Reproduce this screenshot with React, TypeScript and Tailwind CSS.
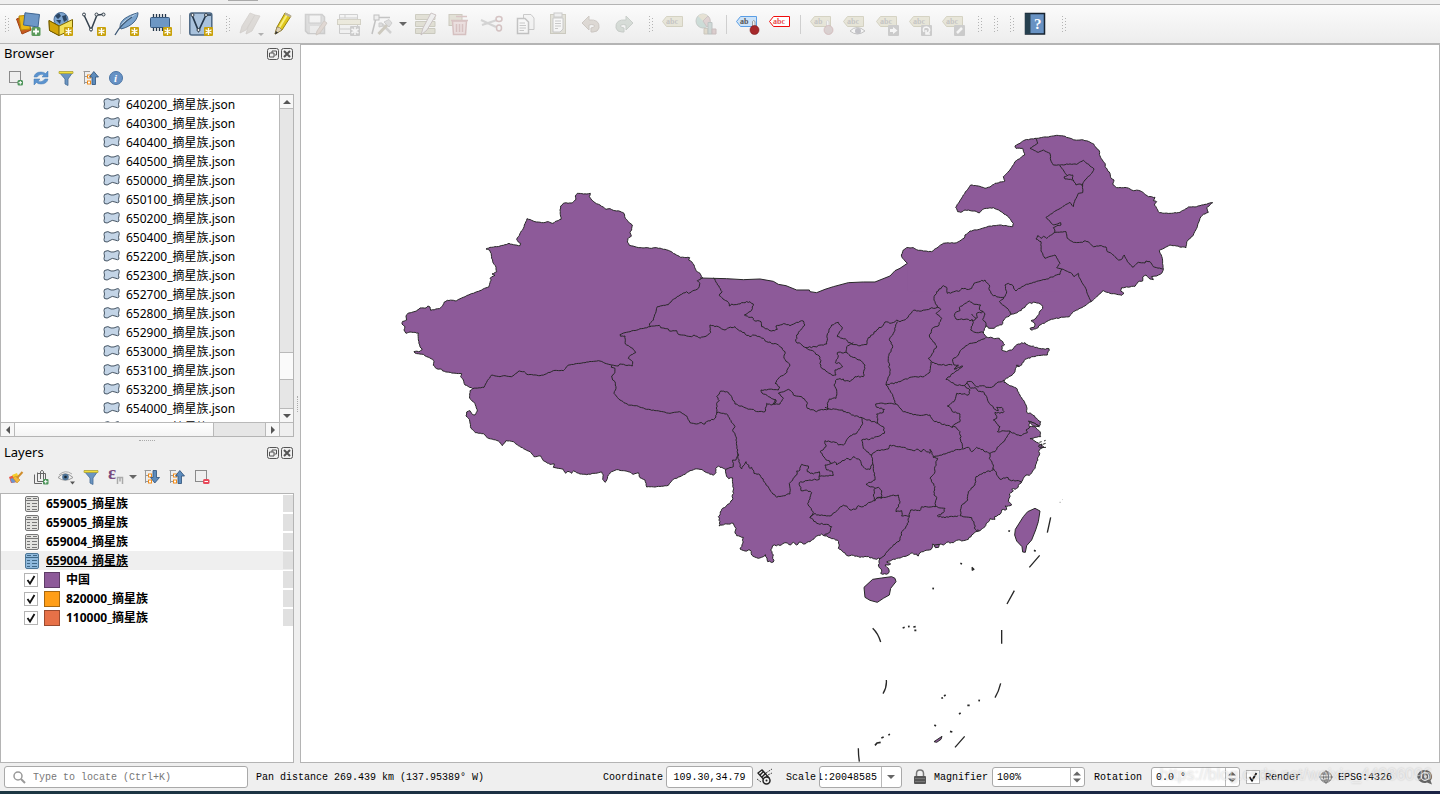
import type { ReactNode } from "react";

const browserFiles = [
    "640200", "640300", "640400", "640500", "650000", "650100", "650200", "650400", "652200",
    "652300", "652700", "652800", "652900", "653000", "653100", "653200", "654000", "654200",
];

const tables = [
    { id: 1, name: "659005_摘星族", active: false },
    { id: 2, name: "659005_摘星族", active: false },
    { id: 3, name: "659004_摘星族", active: false },
    { id: 4, name: "659004_摘星族", active: true },
];

const layers = [
    { name: "中国", swatch: "bg-[#8d5a99] border-[#5e3c66]" },
    { name: "820000_摘星族", swatch: "bg-[#ff9e17] border-[#a8680f]" },
    { name: "110000_摘星族", swatch: "bg-[#e77148] border-[#9a4b30]" },
];

// Splits long segments into short uneven steps, so that borders look surveyed. End points stay put.
function roughen(path: string, amount: number) {
    let out = "";
    let px = 0;
    let py = 0;
    let seed = 7;
    let nums: number[] = [];
    let move = false;
    for (const token of path.match(/[MLZ]|-?\d+/g) ?? []) {
        if (token === "M") {
            move = true;
            continue;
        }
        if (token === "L") continue;
        if (token === "Z") {
            out += "Z";
            continue;
        }
        nums.push(Number(token));
        if (nums.length < 2) continue;
        const [x, y] = nums;
        nums = [];
        if (move) {
            out += `M${x} ${y}`;
            move = false;
        } else {
            const length = Math.hypot(x - px, y - py);
            const steps = Math.max(1, Math.round(length / 5));
            for (let i = 1; i < steps; i++) {
                seed = (seed * 137 + 59) % 1009;
                const shift = (seed / 1009 - 0.5) * 2 * amount;
                const bx = px + ((x - px) * i) / steps - ((y - py) / length) * shift;
                const by = py + ((y - py) * i) / steps + ((x - px) / length) * shift;
                out += `L${bx.toFixed(1)} ${by.toFixed(1)}`;
            }
            out += `L${x} ${y}`;
        }
        px = x;
        py = y;
    }
    return out;
}

// Map sheets, three units per pixel
const coastWest = roughen(
    "M938 293L930 280 918 272 912 255 905 245 896 240 899 233 872 232 855 222 835 211 815 206 800 203 785 205 768 203 750 203 735 200 718 196 712 186 714 176 724 168 720 158 725 150 727 135 715 125 706 115 702 100 690 94 670 91 660 86 648 88 630 75 615 68 605 60 598 50 601 40 580 42 562 40 556 48 558 58 548 68 520 70 512 78 510 90 513 118 500 123 488 130 475 125 460 128 440 126 425 121 411 116 400 145 380 178 385 186 392 190 390 197 370 194 357 190 340 196 320 200 300 202 288 207 300 212 304 225 308 245 318 262 320 275 306 282 315 286 300 295 304 300 300 308 297 320 270 332 240 343 215 354 200 362 172 361 163 366 155 380 148 386 122 391 120 381 114 378 108 384 90 384 80 393 55 399 48 408 50 420 38 424 36 432 45 440 42 450 48 460 60 456 85 459 85 480 90 500 97 508 90 514 72 515 75 519 100 523 110 530 128 538 132 545 130 556 140 566 155 568 158 573 185 579 215 581 212 590 220 600 225 615 248 626 240 632 239 655 255 670 262 693 255 705 247 703 240 692 230 696 228 708 238 718 243 745 256 758 280 761 292 773 325 783 337 797 348 782 370 785 385 797 405 808 420 815 432 830 452 828 460 842 480 853 493 852 490 862 520 868 527 880 534 874 545 880 550 873 570 882 590 884 612 880 635 876 640 885 638 898 645 907 650 900 655 885 665 875 680 869 700 872 718 876 730 883 745 878 750 893 765 900 770 921 800 920 835 916 850 898 870 890 885 883 900 872 915 867 930 868",
    1,
);
const coastSouth = roughen(
    "M0 658L20 668 40 676 48 668 47 655 56 648 70 655 77 658 80 680 86 686 98 684 100 720 97 750 80 766 65 778 60 795 55 800 60 815 57 828 80 822 100 820 108 835 105 845 110 857 130 862 128 880 120 897 135 903 150 900 155 915 175 925 190 920 196 914 203 935 220 936 220 915 212 900 218 887 245 884 258 878 272 885 280 877 290 885 300 876 310 882 330 875 345 862 365 852 385 862 400 866 412 870 418 885 415 895 430 907 445 918 460 916 480 922 500 920 520 926 540 926 535 945 545 960 542 970 548 973 565 970 567 960 555 945 572 942 560 936 590 925 605 922 620 918 632 910 650 912 655 918 660 908 670 905 688 900 696 894 698 882 710 892 720 882 730 885 740 877 760 878 770 871 790 872 805 868 815 855 828 845 840 842 855 830 862 818 870 806 885 808 884 800 900 793 905 780 920 778 915 768 935 765 925 755 930 740 928 732 940 722 935 718 950 715 968 690 978 675 988 676 1005 655 1010 635 1018 615 1018 600 1032 592 1022 585 1010 577 1000 570 990 566 1015 560 1022 560 1020 545 1005 530 988 530 990 515 1005 522 1018 528 1022 515 1010 505 995 492 980 487 978 465 970 450 960 435 952 418 935 408 912 397 915 388 932 378 945 365 948 352 965 345 975 328 1000 320 1030 315 1042 315 1047 296 1030 296 1010 292 985 286 975 278 955 282 935 300 920 305 905 300 905 288 914 284 905 272 898 265 880 265 858 260 850 245 858 228 870 235 882 235 890 228 905 225 915 205 930 195 955 185 975 172 985 160 1005 157 1025 165 1028 175 1010 200 1002 210 993 212 1005 222 1002 232 990 235 993 240 1010 235 1020 225 1045 212 1080 203",
    2,
);
const coastEast = roughen(
    "M510 578L538 575 550 560 580 545 603 530 620 515 640 497 660 505 680 508 695 511 702 505 692 498 695 488 735 484 745 470 758 468 758 456 768 450 780 462 790 464 784 455 800 453 815 445 820 432 817 400 808 376 840 360 888 368 890 350 910 330 920 310 930 280 940 268 955 262 950 248 968 233 945 238 920 245 895 246 870 262 840 265 808 263 800 250 793 240 800 230 790 227 795 217 775 215 760 203 745 196 730 197 710 188 680 188 668 178 672 165 662 158 660 145 645 125 645 115 637 105 628 88 628 78 615 65 612 58 595 49 580 45 555 45 520 33 500 31 470 36 440 40 405 45 390 55 375 63 378 70 398 70 404 90 375 110 360 135 340 155 345 168 315 175 300 186 285 190 265 183 242 180 220 210 205 235 197 247 203 260 212 262 225 255 255 258 268 264 280 252 310 248 330 258 355 275 370 295 368 305 330 300 295 304 268 313 240 318 225 330 222 340 200 353 160 355 125 380 85 376 70 368 50 368 40 375 34 390 38 400 52 415",
    1,
);
const coastNorth =
    "M622 40L600 55 585 62 570 78 525 96 490 96 445 98 400 110 375 118 350 128 330 125 328 120 290 120 258 107 235 103 220 94 180 87 130 89 80 86 0 84";

const bordersWest = [
    "M248 626L282 622 292 602 305 585 330 590 345 587 365 590 388 573 403 575 410 583 450 587 465 583 490 572 520 572 535 555 580 548 625 542 660 554 685 558 690 552 727 558 728 545 715 535 722 525 737 518 728 505 706 492 705 468 692 469 690 464 705 458 780 440 778 432 790 420 802 380 835 374 850 358 870 345 890 335 895 340 925 325 930 310 922 302 938 293",
    "M780 440L808 436 812 443 835 447 838 453 860 452 865 463 905 470 912 465 930 474",
    "M930 728L920 732 900 728 890 708 868 695 840 700 800 692 770 688 740 677 715 675 690 660 672 640 678 625 675 605 668 600 665 588 675 578 675 565 664 562 665 556",
].map((d) => roughen(d, 1));
const bordersSouth = [
    "M40 84L66 125 58 137 85 157 88 168 95 162 105 164 130 158 150 155 160 162 155 180 133 195 160 205 163 212 183 215 185 230 215 243 232 238 228 228 250 221 270 227 290 217 310 213 315 225 290 255 288 275 318 293 345 290 380 282 383 250 395 225 415 217 427 232 412 260 440 270 445 278 475 287 500 284 503 268 530 240 550 225 555 216 575 219 590 210 600 215 620 205 640 181 665 183 690 176 712 172 705 155 702 145 710 125 730 107 740 112 742 130 780 122 785 115 800 118 815 115 822 100 855 90 868 105 868 120 880 137 912 142 920 125 915 105 925 100 940 108 948 123 965 110 1000 97 1020 92 1040 87 1080 73",
    "M912 142L898 155 908 165 925 178 935 193",
    "M765 190L780 182 778 172 790 165 808 153 825 163 842 165 838 178 848 186 830 190 832 203 820 212 795 208 768 207 763 197Z",
    "M845 183L855 192 848 208 858 220 858 230M815 207L820 218 812 240 830 248 850 247M815 192L828 205",
    "M712 172L722 178 708 190 725 205 715 228 697 235 688 258 710 288 695 315 685 325 695 337 725 345 757 345",
    "M858 262L825 278 810 280 785 298 775 315 758 328 762 345 775 345 762 357 788 348 760 370 738 388 768 405 795 406 802 395 815 395 830 410 848 407 858 412 875 412 890 400 912 390",
    "M692 337L690 365 672 380 630 382 600 395 558 405 570 370 565 320 578 290 568 268 580 250 592 215",
    "M558 405L575 430 588 462 550 460 527 462 530 472 553 478 550 487 530 492 533 520 483 502 455 495 450 490 430 485 428 480 385 477 382 460 388 447 408 445 410 420 402 405 410 388 430 387 435 393 450 395 465 380 490 380 495 345 480 330 455 320 440 308 412 308 414 322 406 338 420 340 428 350 405 360 408 375 395 375 362 350 360 322 345 308 318 293",
    "M440 308L440 290 460 278",
    "M0 265L20 258 32 247 30 225 55 230 75 240 82 235 105 230 110 236 150 260 158 255 190 265 200 275 235 285 255 305 252 325 270 345 258 370 240 380 225 400 240 412 235 420 205 418 183 420 190 432 205 440 228 450 225 460 212 465 200 460 195 485 175 485 155 478 140 475 105 462 95 440 80 425 62 423 50 440 58 452 50 460 50 488 45 505 20 515 15 522 0 518",
    "M225 447L220 463 240 462 250 445 235 430 265 418 275 425 280 435 305 440 320 455 322 475 350 485 360 480 385 477 375 472",
    "M50 488L80 492 98 520 105 530 98 542 105 550 110 575 113 610 120 650 125 657 138 635 150 655 155 652 162 670 180 675 210 720 230 742 270 732 268 700 290 675 290 663 300 660 305 643 325 648 322 665 340 672 358 665 358 688 330 690 298 698 303 722 320 720 335 728 323 760 340 788 330 803 350 820 380 823 395 830 390 845 372 857",
    "M113 610L108 630 98 630 100 650 85 655 77 658",
    "M483 502L488 520 470 550 450 558 430 585 415 585 410 578 390 575 375 572 378 590 360 605 375 625 395 640 405 635 410 645 440 625 450 630 460 620 480 630 485 645 500 658 510 658 518 640 515 615 500 605 490 595 485 570 520 565 553 550 550 530 533 520",
    "M358 680L400 676 398 665 380 660 375 645 395 640",
    "M330 803L345 790 350 795 390 798 430 765 440 768 450 780 470 776 475 767 490 770 510 757 525 752 520 735 525 715 498 703 525 690 518 640",
    "M525 752L535 742 545 745 545 722 535 712 525 715M530 742L550 742 570 738 595 735 600 755 588 785 605 782 605 798 628 798 622 825 605 845 600 870 570 895 555 915 540 925",
    "M515 615L530 602 550 600 565 597 570 585 600 590 645 602 650 597 665 605 672 598 690 610 690 598 700 622 713 625 705 650 705 665 690 685 705 710 702 735 710 742 705 770",
    "M628 798L632 780 660 782 665 770 705 770 735 775 730 788 712 798 735 803 775 797",
    "M700 622L735 612 765 600 785 597 805 592 815 605 830 592 870 610 868 625 880 645 880 660 850 668 828 680 825 705 805 725 803 750 785 765 780 797 815 803 822 820 826 838 838 843",
    "M588 462L610 485 650 495 690 495 700 512 757 532 765 530 780 545 782 570 788 595",
    "M757 532L765 522 780 515 780 492 757 485 752 475 742 468 762 455 770 430 790 432 805 435 810 420 795 408",
    "M800 400L812 415 825 413 835 424 850 425 860 440 868 460 885 478 895 482 890 472 905 472 912 485 900 490 885 487 890 505 880 510 900 530 892 545 925 543 960 557 982 548 978 540 990 530",
    "M930 543L915 570 895 590 885 605 870 610M880 655L900 688 920 682 930 690 965 695",
].map((d) => roughen(d, 2));
const bordersEast = [
    "M510 448L515 432 500 428 510 415 495 390 465 400 453 378 453 350 438 342 443 332 455 340 460 334 470 340 493 323 495 318 490 308 500 303 513 300 512 293 490 300 468 277 490 262 540 232 550 245 555 225 565 205 578 203 578 178 570 177 558 180 550 165 542 163 525 162 522 156 535 150 548 150 548 163",
    "M437 40L443 55 420 70 445 82 460 75 480 85 482 105 490 120 520 120 530 117 560 118 580 106 612 132 605 145 585 165 575 182M510 122L530 150",
    "M493 323L528 320 532 340 550 352 578 352 582 348 595 350 610 365 630 362 648 366 652 380 665 386 685 405 695 403 703 390 712 410 728 427 738 418 745 412 765 414 768 408 780 410 790 425 818 432",
    "M515 432L545 445 552 455 565 445 568 458 587 490 590 500 603 530",
].map((d) => roughen(d, 1));

function ChinaMap() {
    return (
        <svg className="block w-full h-full" role="img" aria-label="中国">
            <g fill="#8d5a99" stroke="none">
                <path transform="translate(89 135) scale(.333333)" d={coastWest + "L938 868Z"} />
                <path transform="translate(399 205) scale(.333333)" d={coastSouth + "L1080 12 650 12" + coastNorth.replace("M", " ") + "L-6 84 -6 658Z"} />
                <path transform="translate(589 80) scale(.333333)" d={coastEast + "L52 500 510 500Z"} />
            </g>
            <g fill="none" stroke="#272727" strokeWidth="3" strokeLinejoin="round">
                <g transform="translate(89 135) scale(.333333)">
                    <path d={coastWest} />
                    {bordersWest.map((d) => <path key={d} d={d} />)}
                </g>
                <g transform="translate(399 205) scale(.333333)">
                    <path d={coastSouth} />
                    <path d={coastNorth} />
                    {bordersSouth.map((d) => <path key={d} d={d} />)}
                    <path fill="#8d5a99" d="M985 513L1005 520 1018 530 1000 528ZM703 885L718 883 716 892 706 893ZM1015 588L1025 582 1022 595ZM1028 583L1037 580M1032 573L1037 571M1018 577L1025 575M1024 593L1038 592M948 346L956 346" />
                </g>
                <g transform="translate(589 80) scale(.333333)">
                    <path d={coastEast} />
                    {bordersEast.map((d) => <path key={d} d={d} />)}
                </g>
                <g transform="translate(539 435) scale(.333333)">
                    <path fill="#8d5a99" d="M585 85L600 93 595 125 587 150 575 180 560 197 556 217 548 216 546 200 530 183 524 165 526 148 550 110 563 95Z" />
                    <path fill="#8d5a99" d="M98 298L125 294 155 290 165 295 168 305 152 325 148 345 130 355 112 367 90 361 75 352 72 322Z" />
                    <path fill="#8d5a99" d="M282 785L306 769 303 778 290 787Z" />
                    <path strokeWidth="4" d="M632 112L622 158M599 226L568 262M523 332L501 372M485 450V491M482 610Q476 635 465 653M98 445Q114 460 122 486M139 600Q141 622 129 641M55 805Q55 825 58 845M374 769L345 802" />
                    <path strokeWidth="5" d="M505 152L510 154M582 211L587 214M361 250L366 252M395 262L401 268 395 271M277 325L282 326M188 444L194 442M204 440L209 439M220 441L227 440M223 451L229 451M304 655L309 653M312 648L317 645M382 676L389 676M415 661L420 662M357 702L362 699M283 735L288 738M330 754L337 756M145 765L150 763M124 774L131 771M105 796L111 789 122 787" />
                    <path strokeWidth="2" stroke="#999" d="M658 67L663 67M667 59L669 58" />
                </g>
            </g>
        </svg>
    );
}

type IconProps = { children: ReactNode; size?: "sm" | "lg"; off?: boolean };

function Icon({ children, size = "lg", off }: IconProps) {
    return (
        <svg
            viewBox={size === "lg" ? "0 0 24 24" : "0 0 16 16"}
            className={`${size === "lg" ? "w-6 h-6" : "w-4 h-4"} shrink-0 overflow-visible ${off ? "opacity-30" : ""}`}
            fill="none"
            aria-hidden="true"
        >
            {children}
        </svg>
    );
}

function Tool({ label, off, children }: { label: string; off?: boolean; children: ReactNode }) {
    return (
        <button type="button" aria-label={label} title={label} disabled={off} className="w-[33px] h-8 shrink-0 flex items-center justify-center">
            <Icon off={off}>{children}</Icon>
        </button>
    );
}

function SmallTool({ label, children }: { label: string; children: ReactNode }) {
    return (
        <button type="button" aria-label={label} title={label} className="w-[25px] h-6 shrink-0 flex items-center justify-center">
            <Icon size="sm">{children}</Icon>
        </button>
    );
}

function Handle() {
    return (
        <div className="w-4 h-4 shrink-0 pl-[9px]">
            <svg className="w-1 h-[17px]" aria-hidden="true">
                <path d="M.5 0V17M3.5 2V17" stroke="#b4b4b4" strokeDasharray="1 2" />
            </svg>
        </div>
    );
}

function Separator() {
    return (
        <div className="w-2 shrink-0 flex justify-center">
            <div className="w-px h-[19px] bg-[#cfcfcf]" />
        </div>
    );
}

function DropArrow() {
    return <svg className="w-2 h-1 shrink-0" viewBox="0 0 8 4" aria-hidden="true"><path d="M0 0H8L4 4Z" fill="#666" /></svg>;
}

function Star() {
    return (
        <g>
            <rect x="15" y="15" width="9" height="9" rx="1" fill="#c9a20c" />
            <path d="M19.5 16V23M16.5 17.7L22.5 21.300M16.5 21.300L22.5 17.7" stroke="#fff" strokeWidth="1.300" />
        </g>
    );
}

function Tag({ color = "#c9c39a", line = "#8c8450", text = "abc" }: { color?: string; line?: string; text?: string }) {
    return (
        <g>
            <path d="M1.500 9.500L5.500 4.500H21.500V14.500H5.500Z" fill={color} stroke={line} />
            <text x="5" y="12" fontSize="8" fontWeight="bold" fill={line === "#f00c0c" ? "#e85050" : "#555"} fontFamily="'Liberation Serif', serif">{text}</text>
        </g>
    );
}

function Pin({ color }: { color: string }) {
    return (
        <g>
            <path d="M17.500 15V9.500Q18.500 7.500 20 9.500V15" fill="#eee" stroke="#888" strokeWidth=".8" />
            <circle cx="19.500" cy="18" r="4.500" fill={color} stroke="#7c1518" strokeWidth=".6" />
        </g>
    );
}

function Pencil() {
    return (
        <g>
            <path d="M4 22L6 15 14 1 20 4 11 18Z" fill="#e0c81c" stroke="#9a8412" />
            <path d="M8 16L16.500 2" stroke="#f8ee80" strokeWidth="2" />
            <path d="M4 22L6 15 8.500 15.500 11 18Z" fill="#ded1b5" stroke="#8c7d55" strokeWidth=".7" />
            <path d="M4 22.500L4.800 19 7.300 20.800Z" fill="#333" />
            <path d="M14 1.500L20 4.500" stroke="#b9b09c" strokeWidth="2" />
        </g>
    );
}

function MainToolbar() {
    return (
        <div role="toolbar" aria-label="Main" className="h-[38px] shrink-0 flex items-center overflow-hidden bg-gradient-to-b from-[#fbfbfb] to-[#ededed]">
            <div className="w-[11px] shrink-0 -ml-1 mr-1"><Handle /></div>
            <Tool label="Data Source Manager">
                <path d="M.5 7L10 3 15 18 6 22Z" fill="#c75a21" stroke="#a2430f" />
                <path d="M3 4L14 3 14 17 5 18Z" fill="#e7b817" stroke="#b88b0a" />
                <path d="M9 .8L23.500 2.500 22 15 7.500 13Z" fill="#6d97c6" stroke="#3f6591" />
                <rect x="15.500" y="15" width="9" height="9" rx="1.500" fill="#5b9a5b" />
                <path d="M20 16.500V22.500M17 19.500H23" stroke="#fff" strokeWidth="1.800" />
            </Tool>
            <Tool label="New GeoPackage Layer">
                <circle cx="12" cy="7.500" r="7" fill="#7ba4d0" stroke="#4d6f98" />
                <path d="M6 4L10 1 12 4 9 7ZM13 4L17 3 18 8 15 10ZM7 8L12 8 11 12Z" fill="#2b4563" />
                <path d="M0 8.500L10 14 23.500 7.500V17.500L10 23.500 .5 18.500Z" fill="#f2e05c" stroke="#7d6500" />
                <path d="M0 8.500L10 14V23.500L.5 18.500Z" fill="#d3a50a" stroke="#735b00" />
                <Star />
            </Tool>
            <Tool label="New Shapefile Layer">
                <path d="M2 3L9 18 15 3Q18 3 22 2" stroke="#35424e" strokeWidth="1.500" />
                <g fill="#eee" stroke="#35424e"><circle cx="2" cy="2.500" r="1.500" /><circle cx="9" cy="17.500" r="1.500" /><circle cx="14.500" cy="2.500" r="1.500" /><circle cx="21.500" cy="2.500" r="1.500" /></g>
                <Star />
            </Tool>
            <Tool label="New SpatiaLite Layer">
                <path d="M5 15C5 8 12 4 23 .7 23 7 18 14 6 17Z" fill="#7ba4cd" stroke="#416387" />
                <path d="M5 15C8 8 15 5 23 .7L11 9Z" fill="#c8dced" />
                <path d="M0 23Q6 12 17 5" stroke="#3d5875" strokeWidth="1.300" />
                <Star />
            </Tool>
            <Tool label="New Temporary Scratch Layer">
                <path d="M5.500 2V19M8.500 2V19M11.500 2V19M14.500 2V19M17.500 2V19" stroke="#26384b" strokeWidth="1.300" />
                <rect x="2.500" y="5.500" width="19" height="10" rx="1" fill="#6d97c4" stroke="#38597e" />
                <Star />
            </Tool>
            <Separator />
            <Tool label="New Virtual Layer">
                <rect x=".8" y="1" width="22" height="22" rx="2" fill="#a9c2dc" stroke="#4c6783" strokeWidth="1.500" />
                <path d="M3 3L9.500 19 17 3H22" stroke="#26384b" strokeWidth="1.700" />
                <g fill="#eee" stroke="#35424e"><circle cx="3.500" cy="3" r="1.500" /><circle cx="9.500" cy="18" r="1.500" /><circle cx="17" cy="3" r="1.500" /></g>
                <Star />
            </Tool>
            <Handle />
            <Tool label="Current Edits" off>
                <g fill="#a99f95" stroke="#857a70" strokeWidth=".8">
                    <path d="M2 21L4 14 12 1 17 3 8 18Z" />
                    <path d="M8 22L10 15 17 3 22 4 14 19Z" />
                </g>
                <path d="M20 21H26L23 24Z" fill="#222" />
            </Tool>
            <Tool label="Toggle Editing"><Pencil /></Tool>
            <Tool label="Save Layer Edits" off>
                <path d="M1.500 2.500H18L20.500 5V21.500H4L1.500 19Z" fill="#aaa" stroke="#777" strokeWidth="1.500" />
                <rect x="5" y="3" width="12" height="8" fill="#eee" stroke="#777" />
                <rect x="6" y="14" width="9" height="7" fill="#ddd" />
                <path d="M12 23L13 19 20 9 23 11 16 21Z" fill="#b69b8b" stroke="#85705f" />
            </Tool>
            <Tool label="Add Record" off>
                <path d="M2.500 2.500H20.500V21.500H2.500Z" fill="#eee" stroke="#777" />
                <path d="M2.500 6H20.500M2.500 17H20.500M8 2V6" stroke="#777" />
                <rect x=".5" y="7.500" width="23" height="5" fill="#d7d0a8" stroke="#88825c" />
                <rect x="13" y="14" width="10" height="10" rx="1" fill="#777" />
                <path d="M18 15V23M14.500 17L21.500 21M14.500 21L21.500 17" stroke="#fff" strokeWidth="1.500" />
            </Tool>
            <Tool label="Vertex Tool" off>
                <path d="M6 6L2 22M6 5.500H20" stroke="#555" strokeWidth="1.500" />
                <rect x="4" y="3" width="5" height="5" fill="#ddd" stroke="#444" />
                <path d="M12 12L21 21" stroke="#8b8b8b" strokeWidth="2.500" />
                <path d="M8.500 22L18 12" stroke="#7b6f4c" strokeWidth="3" />
                <path d="M9 15V11L12 11 13 14ZM14 10L19 7.500 22 11 19 15Z" fill="#aaa" stroke="#777" />
            </Tool>
            <div className="w-[11px] shrink-0 pl-px"><DropArrow /></div>
            <Tool label="Modify Attributes" off>
                <g fill="#b5b18d" stroke="#72704d"><path d="M1.500 2.500H21V7.500H1.500ZM1.500 9.500H21V14.500H1.500ZM1.500 16.500H21V21.500H1.500Z" /></g>
                <path d="M7 23L9 16 17 1 22 3 13 18Z" fill="#ddd" stroke="#6e5555" />
            </Tool>
            <Tool label="Delete Selected" off>
                <rect x="2" y="2.500" width="13" height="11" fill="#b5b18d" stroke="#716644" />
                <path d="M5.500 9H19.500L18.500 22.500H6.500Z" fill="#d8b2b2" stroke="#995353" strokeWidth="1.500" />
                <path d="M4 8.500H21M9 4.500H20M9.500 12V20M12.500 12V20M15.500 12V20" stroke="#995353" strokeWidth="1.500" />
            </Tool>
            <Tool label="Cut Features" off>
                <path d="M1 8L16 15M2 13L17 8" stroke="#8a8a8a" strokeWidth="2" />
                <ellipse cx="19" cy="7" rx="3" ry="2.500" stroke="#8d5353" strokeWidth="1.500" />
                <ellipse cx="19" cy="16" rx="2.500" ry="3" stroke="#8d5353" strokeWidth="1.500" />
            </Tool>
            <Tool label="Copy Features" off>
                <path d="M10.500 2.500H18L21 6V17.500H10.500Z" fill="#eee" stroke="#666" />
                <path d="M4.500 6.500H12L15.500 10V21.500H4.500Z" fill="#fff" stroke="#555" strokeWidth="1.500" />
                <path d="M6.500 11H12M6.500 13.500H13M6.500 16H13M6.500 18.500H11" stroke="#666" />
            </Tool>
            <Tool label="Paste Features" off>
                <rect x="4.500" y="2.500" width="15" height="19" fill="#b8b59a" stroke="#777250" />
                <path d="M7 6H17V17L14 20H7Z" fill="#fff" stroke="#666" />
                <rect x="8" y="1" width="8" height="4" fill="#ddd" stroke="#666" />
                <path d="M9 9H15M9 11.500H15M9 14H15M9 16.500H12" stroke="#666" />
            </Tool>
            <Tool label="Undo" off>
                <path d="M3 11L10 4V8Q21 7 20 16 19 20 14 20H12V16Q17 15 15 13 13 12 10 13V18Z" fill="#a99b8b" stroke="#766658" />
            </Tool>
            <Tool label="Redo" off>
                <path d="M21 11L14 4V8Q3 7 4 16 5 20 10 20H12V16Q7 15 9 13 11 12 14 13V18Z" fill="#93a696" stroke="#67776b" />
            </Tool>
            <Handle />
            <Tool label="Layer Labeling Options" off><Tag /></Tool>
            <Tool label="Layer Diagram Options" off>
                <circle cx="9" cy="9" r="7" fill="#73a798" stroke="#5d6b62" />
                <path d="M9 9L4 4A7 7 0 0 1 14 4Z" fill="#c0b285" />
                <path d="M9 9L14 4A7 7 0 0 1 13 15Z" fill="#b08585" stroke="#705858" />
                <path d="M10 16.500H14V22H10Z" fill="#b8a477" stroke="#776948" />
                <path d="M14 10.500H18V22H14Z" fill="#7d9c98" stroke="#445b58" />
                <path d="M18 17H22V22H18Z" fill="#a97b7b" stroke="#704b4b" />
            </Tool>
            <Separator />
            <Tool label="Highlight Pinned Labels"><Tag color="#cde3f8" line="#5a9ee5" text="ab" /><Pin color="#a6282b" /></Tool>
            <Tool label="Toggle Unplaced Labels"><Tag color="#fff" line="#f00c0c" /></Tool>
            <Separator />
            <Tool label="Pin Labels" off><Tag text="ab" /><Pin color="#a58686" /></Tool>
            <Tool label="Show Labels" off>
                <Tag />
                <path d="M8 19Q15 12 23 19 15 25 8 19Z" fill="#fff" stroke="#555" />
                <circle cx="16" cy="19" r="3" fill="#556" />
            </Tool>
            <Tool label="Move Label" off>
                <Tag />
                <rect x="13" y="13" width="11" height="11" rx="1" fill="#777" />
                <path d="M15 17H18V15L22.500 18.500 18 22V20H15Z" fill="#fff" />
            </Tool>
            <Tool label="Rotate Label" off>
                <Tag />
                <rect x="13" y="13" width="11" height="11" rx="1" fill="#777" />
                <path d="M16 20Q14 15 18.500 15 23 16 21 20L18 22M18 18V22H22" stroke="#fff" strokeWidth="1.600" />
            </Tool>
            <Tool label="Change Label Properties" off>
                <Tag />
                <rect x="13" y="13" width="11" height="11" rx="1" fill="#777" />
                <path d="M16 21L21 16" stroke="#fff" strokeWidth="2.500" />
            </Tool>
            <Handle />
            <Handle />
            <Handle />
            <button type="button" aria-label="Help" className="w-9 h-8 shrink-0 flex items-center justify-center">
                <Icon>
                    <rect x="2.500" y="1.500" width="19" height="20.500" fill="#6892c3" stroke="#17232f" strokeWidth="1.500" />
                    <path d="M2 1.500H7.500V22H2Z" fill="#26404f" />
                    <text x="11" y="17" fontSize="15" fontWeight="bold" fill="#fff" fontFamily="'Liberation Serif', serif">?</text>
                </Icon>
            </button>
            <Handle />
        </div>
    );
}

function Filter() {
    return (
        <>
            <path d="M1 2H15L10 9V15.500L7 14V9Z" fill="#6a94c1" stroke="#446b95" strokeWidth=".8" />
            <path d="M1 1.500H15V3.500H1Z" fill="#f2df3a" stroke="#a89a28" strokeWidth=".6" />
        </>
    );
}

function TreeArrow({ down }: { down?: boolean }) {
    return (
        <>
            <path d="M.5 1.500H7M1.500 1.500V14M1.500 6.500H4M1.500 12.500H4" stroke="#999" />
            <rect x="4.500" y="5" width="3" height="3" fill="#fff" stroke="#f08c1a" />
            <rect x="4.500" y="11" width="3" height="3" fill="#fff" stroke="#f08c1a" />
            {down
                ? <path d="M9 1.500H12.500V8.500H15.500L10.800 14 6.500 8.500H9Z" fill="#5d8cbd" stroke="#2c4f77" strokeWidth=".8" />
                : <path d="M9 14.500H12.500V7H15.500L10.800 1.500 6.500 7H9Z" fill="#5d8cbd" stroke="#2c4f77" strokeWidth=".8" />}
        </>
    );
}

function PanelTitle({ title }: { title: string }) {
    return (
        <div className="h-5 shrink-0 flex items-center pl-1 pr-px">
            <h2 className="flex-1 self-start text-[13px] leading-[18px]">{title}</h2>
            <button type="button" aria-label={`Float ${title}`} className="w-[14px] h-4 flex items-center">
                <svg className="w-3 h-3" viewBox="0 0 12 12" fill="none" stroke="#555" aria-hidden="true">
                    <rect x=".5" y=".5" width="11" height="11" rx="2" />
                    <path d="M5 5V3H9.500V7H7.500M2.500 5H7V9H2.500Z" />
                </svg>
            </button>
            <button type="button" aria-label={`Close ${title}`} className="w-[12px] h-4 flex items-center">
                <svg className="w-3 h-3" viewBox="0 0 12 12" fill="none" stroke="#555" aria-hidden="true">
                    <rect x=".5" y=".5" width="11" height="11" rx="2" />
                    <path d="M3 3L9 9M9 3L3 9" strokeWidth="2" />
                </svg>
            </button>
        </div>
    );
}

function ScrollArrow({ d, label, className }: { d: string; label: string; className: string }) {
    return (
        <button type="button" aria-label={label} className={`shrink-0 flex items-center justify-center bg-[#f7f7f7] border-[#b9b9b9] ${className}`}>
            <svg className="w-2 h-2" viewBox="0 0 8 8" aria-hidden="true"><path d={d} fill="#555" /></svg>
        </button>
    );
}

function BrowserPanel() {
    return (
        <section className="shrink-0">
            <PanelTitle title="Browser" />
            <div className="h-[30px] flex items-center pl-[3px] pb-[2px]">
                <SmallTool label="Add Selected Layers">
                    <rect x="1.500" y="1.500" width="11" height="11" stroke="#8a8a8a" />
                    <rect x="9.500" y="10" width="5.500" height="5.500" rx="1.500" fill="#4c9459" />
                    <path d="M12.300 11V14.500M10.500 12.700H14" stroke="#fff" />
                </SmallTool>
                <SmallTool label="Refresh">
                    <path d="M1 7Q2 2 8 2 11 2 12.500 3.500L15 1V7H9L11 5Q7 3 4 7Z" fill="#5b93cf" stroke="#427ab3" strokeWidth=".5" />
                    <path d="M15 9Q14 14 8 14 5 14 3.500 12.500L1 15V9H7L5 11Q9 13 12 9Z" fill="#5b93cf" stroke="#427ab3" strokeWidth=".5" />
                </SmallTool>
                <SmallTool label="Filter Browser"><Filter /></SmallTool>
                <SmallTool label="Collapse All"><TreeArrow /></SmallTool>
                <SmallTool label="Properties">
                    <circle cx="8" cy="8" r="6.500" fill="#6792c5" stroke="#4b75a5" />
                    <text x="6" y="12" fontSize="11" fontStyle="italic" fontWeight="bold" fill="#fff" fontFamily="'Liberation Serif', serif">i</text>
                </SmallTool>
            </div>
            <div className="border border-[#b4b4b4] bg-white">
                <div className="flex h-[327px]">
                    <ul className="flex-1 overflow-hidden">
                        {browserFiles.map((code) => (
                            <li key={code} className="h-[19px] flex items-center gap-[6px] pl-[102px] text-xs">
                                <svg className="w-[17px] h-3 shrink-0 mb-px" viewBox="0 0 17 12" aria-hidden="true">
                                    <path d="M1.500 1.500Q5 -.5 8 2 11 2.500 14 .8 17 0 16 4 15 6 16 9 15 10.500 12 9 9 7.500 7 9.500 4 12 1.500 10.500 .5 9 1.500 6 .5 3 1.500 1.500Z" fill="#c3d4e6" stroke="#465564" />
                                </svg>
                                <span className="whitespace-nowrap">{code}_摘星族.json</span>
                            </li>
                        ))}
                    </ul>
                    <div className="w-[14px] shrink-0 flex flex-col border-l border-[#b9b9b9] bg-[#e6e6e6]">
                        <ScrollArrow label="Scroll up" className="h-[14px] border-b" d="M0 6H8L4 2Z" />
                        <div className="flex-1" />
                        <div className="h-7 bg-[#fafafa] border-y border-[#b9b9b9]" />
                        <div className="h-7" />
                        <ScrollArrow label="Scroll down" className="h-[14px] border-t" d="M0 2H8L4 6Z" />
                    </div>
                </div>
                <div className="flex h-[14px] border-t border-[#b9b9b9] bg-[#e6e6e6]">
                    <ScrollArrow label="Scroll left" className="w-[14px] border-r" d="M6 0V8L2 4Z" />
                    <div className="w-[199px] bg-gradient-to-b from-white to-[#f4f4f4] border-r border-[#b9b9b9]" />
                    <div className="flex-1" />
                    <ScrollArrow label="Scroll right" className="w-[14px] border-l" d="M2 0V8L6 4Z" />
                    <div className="w-[14px] bg-[#efefef] border-l border-[#b9b9b9]" />
                </div>
            </div>
        </section>
    );
}

function CheckBox({ id }: { id: string }) {
    return (
        <span className="grid w-[14px] h-[14px] shrink-0">
            <input id={id} type="checkbox" defaultChecked className="peer appearance-none col-start-1 row-start-1 w-[14px] h-[14px] bg-white border border-[#b4b4b4]" />
            <svg className="col-start-1 row-start-1 w-[14px] h-[14px] pointer-events-none invisible peer-checked:visible" viewBox="0 0 14 14" fill="none" aria-hidden="true">
                <path d="M3.500 7L6 10.500 10.500 3" stroke="#111" strokeWidth="1.800" />
            </svg>
        </span>
    );
}

function LayersPanel() {
    return (
        <section className="flex-1 min-h-0 flex flex-col">
            <PanelTitle title="Layers" />
            <div className="h-[30px] shrink-0 flex items-center pl-[3px] pb-[2px]">
                <SmallTool label="Open Layer Styling">
                    <path d="M1 8L6 6 9 13 3 14Z" fill="#e85745" />
                    <path d="M4 6L9 4 11 9 7 11Z" fill="#f4cf2a" />
                    <path d="M2 10L5 9 8 13 4 14Z" fill="#6a94d0" />
                    <path d="M5 9L8 7 12 11 9 14Z" fill="#f2b93c" stroke="#c98b20" strokeWidth=".6" />
                    <path d="M9 9L14.500 3" stroke="#d08e2d" strokeWidth="2" />
                </SmallTool>
                <SmallTool label="Add Group">
                    <path d="M1.500 5.500V14.500H9M4.500 3.500V12.500H12.500V4.500H4.500M7.500 10V2.500Q9 0 10.500 2.500V10.500" stroke="#666" />
                    <rect x="10" y="10" width="5.500" height="5.500" rx="1" fill="#4c9459" />
                    <path d="M12.700 11V14.500M11 12.700H14.500" stroke="#fff" />
                </SmallTool>
                <SmallTool label="Manage Map Themes">
                    <path d="M0 8.500Q7 1 15 8.500 7 14 0 8.500Z" fill="#eee" stroke="#999" />
                    <circle cx="7.500" cy="8" r="3.300" fill="#4e7397" />
                    <circle cx="7.500" cy="8" r="1.300" fill="#17232d" />
                    <path d="M1 6Q7 0 14 5" stroke="#aaa" />
                    <path d="M12 12.500H17L14.500 15.500Z" fill="#555" />
                </SmallTool>
                <SmallTool label="Filter Legend"><Filter /></SmallTool>
                <SmallTool label="Filter Legend by Expression">
                    <text x="0" y="10" fontSize="19" fontWeight="bold" fill="#7a4b80" fontFamily="'Liberation Serif', serif">ε</text>
                    <path d="M9.500 15V8.500H14.500V15M12 9V12.500" stroke="#aaa" strokeWidth="1.500" />
                </SmallTool>
                <div className="w-[11px] pl-px"><DropArrow /></div>
                <SmallTool label="Expand All"><TreeArrow down /></SmallTool>
                <SmallTool label="Collapse All"><TreeArrow /></SmallTool>
                <SmallTool label="Remove Layer">
                    <rect x="1.500" y="1.500" width="11" height="11" stroke="#8a8a8a" />
                    <rect x="9" y="10" width="6.500" height="5" rx="1.500" fill="#e8495a" />
                    <path d="M10.500 12.500H14" stroke="#fff" />
                </SmallTool>
            </div>
            <ul className="flex-1 min-h-0 overflow-hidden border border-[#b4b4b4] bg-white text-xs font-bold">
                {tables.map((table) => (
                    <li key={table.id} className={`h-[19px] flex items-center pl-6 ${table.active ? "bg-[#efefef]" : ""}`}>
                        <svg className="w-[14px] h-4 shrink-0 mr-[7px]" viewBox="0 0 14 16" aria-hidden="true">
                            <rect x=".5" y=".5" width="13" height="15" rx="1.500" fill={table.active ? "#8fb9dc" : "#e3e3e0"} stroke={table.active ? "#4d7797" : "#777"} />
                            <path d="M1 4.500H13M2 2.500H6M8 2.500H12M2 7.500H5M7 7.500H12M2 10.500H5M7 10.500H12M2 13.500H5M7 13.500H12" stroke={table.active ? "#3f6887" : "#777"} />
                        </svg>
                        <span className={`flex-1 ${table.active ? "underline" : ""}`}>{table.name}</span>
                        <span className="w-[10px] h-[17px] bg-[#e0e0e0]" />
                    </li>
                ))}
                {layers.map((layer) => (
                    <li key={layer.name} className="h-[19px] flex items-center pl-[23px]">
                        <CheckBox id={layer.name} />
                        <label htmlFor={layer.name} className="flex-1 flex items-center gap-[6px] pl-[6px]">
                            <span className={`w-4 h-4 border ${layer.swatch}`} />
                            {layer.name}
                        </label>
                        <span className="w-[10px] h-[17px] bg-[#e0e0e0]" />
                    </li>
                ))}
            </ul>
        </section>
    );
}

function SpinBox({ id, value, className }: { id: string; value: string; className: string }) {
    return (
        <div className={`h-5 shrink-0 flex border border-[#a9a9a9] rounded-[3px] bg-white overflow-hidden ${className}`}>
            <input id={id} defaultValue={value} className="flex-1 min-w-0 pl-1 outline-none" />
            <button type="button" aria-label={`Step ${id}`} className="w-[14px] border-l border-[#b9b9b9] flex items-center justify-center">
                <svg className="w-2 h-3" viewBox="0 0 8 12" aria-hidden="true"><path d="M0 4.500H8L4 .5ZM0 7.500H8L4 11.500Z" fill="#666" /></svg>
            </button>
        </div>
    );
}

function StatusBar() {
    return (
        <footer className="relative h-7 shrink-0 flex items-center pl-1 pr-[7px] whitespace-pre font-['Liberation_Mono','Noto_Sans_CJK_SC',monospace] text-[10px]">
            <div className="w-[244px] h-[22px] shrink-0 flex items-center gap-[7px] pl-2 border border-[#a9a9a9] rounded-[3px] bg-white">
                <svg className="w-[13px] h-[13px]" viewBox="0 0 13 13" fill="none" stroke="#999" aria-hidden="true">
                    <circle cx="5" cy="5" r="4" strokeWidth="1.500" /><path d="M8 8L12 12" strokeWidth="2" />
                </svg>
                <input aria-label="Locator" placeholder="Type to locate (Ctrl+K)" className="flex-1 min-w-0 outline-none placeholder:text-[#777]" />
            </div>
            <span className="flex-1 pl-2">Pan distance 269.439 km (137.95389° W)</span>
            <label htmlFor="coordinate">Coordinate</label>
            <input id="coordinate" defaultValue="109.30,34.79" className="w-[87px] h-[22px] ml-[3px] px-1 text-center border border-[#a9a9a9] rounded-[3px] bg-white" />
            <button type="button" aria-label="Toggle extents" className="w-4 h-4 ml-1">
                <Icon size="sm">
                    <path d="M1 4L5 1 12 9 8 12Z" fill="#fff" stroke="#222" strokeWidth="1.300" />
                    <path d="M3 6L7 2M5 8L9 4M7 10L11 7" stroke="#222" strokeWidth="1.500" />
                    <path d="M9 4L15 0M11 6L15 4M0 10L4 13" stroke="#444" strokeDasharray="2 1" />
                    <circle cx="9.500" cy="11.500" r="3.500" fill="#eee" stroke="#222" strokeWidth="1.500" />
                    <circle cx="9.500" cy="11.500" r="1" fill="#222" />
                </Icon>
            </button>
            <label htmlFor="scale" className="ml-[13px]">Scale</label>
            <div className="grid items-center w-[83px] h-[22px] ml-[3px] border border-[#a9a9a9] rounded-[3px] bg-white overflow-hidden">
                <select id="scale" className="col-start-1 row-start-1 w-full h-5 appearance-none -indent-[3px] outline-none">
                    <option>1:20048585</option>
                </select>
                <span className="col-start-1 row-start-1 justify-self-end w-5 h-5 pl-[5px] flex items-center border-l border-[#b9b9b9] pointer-events-none"><DropArrow /></span>
            </div>
            <button type="button" aria-label="Lock scale" className="w-3 h-4 ml-3">
                <svg className="w-3 h-4" viewBox="0 0 12 16" fill="none" aria-hidden="true">
                    <path d="M2.500 8V4.500Q2.500 1 6 1T9.500 4.500V8" stroke="#777" strokeWidth="1.500" />
                    <rect x="0" y="7" width="12" height="8" rx="1" fill="#555" />
                    <path d="M1 9.500H11M1 12.500H11" stroke="#777" />
                </svg>
            </button>
            <label htmlFor="magnifier" className="ml-2">Magnifier</label>
            <SpinBox id="magnifier" value="100%" className="w-[93px] ml-1" />
            <label htmlFor="rotation" className="ml-[9px]">Rotation</label>
            <SpinBox id="rotation" value="0.0 °" className="w-[89px] ml-[9px]" />
            <span className="w-[6px]" />
            <CheckBox id="render" />
            <label htmlFor="render" className="ml-[5px]">Render</label>
            <button type="button" className="ml-[18px] flex items-center gap-[5px]">
                <svg className="w-[14px] h-[14px]" viewBox="0 0 14 14" fill="none" stroke="#777" aria-hidden="true">
                    <circle cx="7" cy="7" r="5.500" /><ellipse cx="7" cy="7" rx="2.500" ry="5.500" /><path d="M0 7H14M7 0V14M2.500 4H11.500M2.500 10H11.500" />
                </svg>
                EPSG:4326
            </button>
            <button type="button" aria-label="Messages" className="ml-[25px] w-4 h-4">
                <Icon size="sm">
                    <path d="M8 1A7 6.500 0 1 0 10 13.500L15 15.500 13.500 11.500A7 6.500 0 0 0 8 1Z" fill="#666" />
                    <circle cx="8" cy="7.500" r="3.800" stroke="#eee" strokeWidth="1.200" />
                    <circle cx="8.500" cy="7.500" r="1.500" fill="#ddd" />
                </Icon>
            </button>
            <span className="absolute right-2 top-[2px] text-base leading-5 text-white/50 [text-shadow:0_0_2px_rgba(0,0,0,0.2)] font-['Liberation_Sans',sans-serif] pointer-events-none">https://blog.csdn.net/weixin_44986096</span>
        </footer>
    );
}

export default function App() {
    return (
        <div className="h-screen flex flex-col overflow-hidden bg-[#efefef] text-black font-['Noto_Sans','Noto_Sans_CJK_SC',sans-serif]">
            <div className="h-[5px] shrink-0 border-b border-[#b4b4b4] pl-[228px]">
                <div className="w-[30px] h-px bg-[#aaa]" />
            </div>
            <MainToolbar />
            <main className="flex-1 min-h-0 flex border-t border-[#b4b4b4]">
                <aside className="w-[294px] shrink-0 flex flex-col">
                    <BrowserPanel />
                    <div className="h-[6px] shrink-0 flex items-center justify-center">
                        <div className="w-4 border-t border-dotted border-[#aaa]" />
                    </div>
                    <LayersPanel />
                </aside>
                <div className="w-[6px] shrink-0 flex flex-col justify-center items-center">
                    <div className="h-4 border-l border-dotted border-[#aaa]" />
                </div>
                <div className="flex-1 min-w-0 border border-[#b4b4b4] bg-white overflow-hidden">
                    <ChinaMap />
                </div>
            </main>
            <StatusBar />
            <div className="h-[3px] shrink-0 bg-gradient-to-r from-[#1d3743] to-[#1b2345]" />
        </div>
    );
}
